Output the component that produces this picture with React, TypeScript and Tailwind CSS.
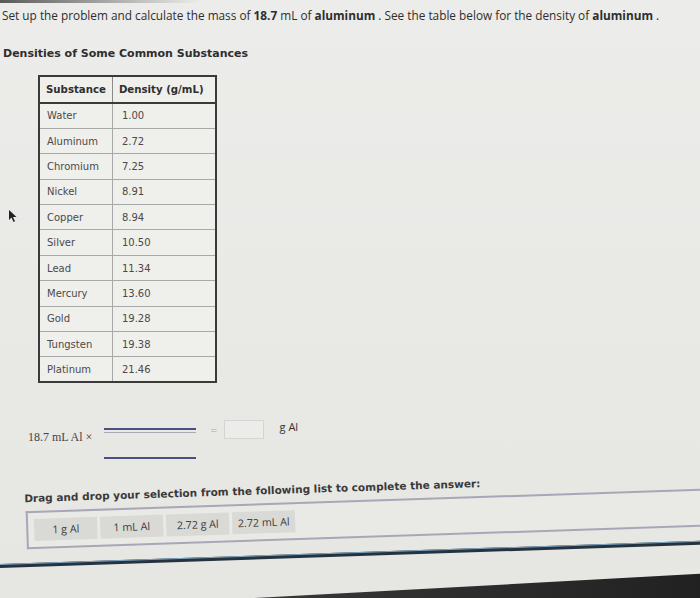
import React from "react";

const rows: [string, string][] = [
  ["Water", "1.00"],
  ["Aluminum", "2.72"],
  ["Chromium", "7.25"],
  ["Nickel", "8.91"],
  ["Copper", "8.94"],
  ["Silver", "10.50"],
  ["Lead", "11.34"],
  ["Mercury", "13.60"],
  ["Gold", "19.28"],
  ["Tungsten", "19.38"],
  ["Platinum", "21.46"],
];

const chips = ["1 g Al", "1 mL Al", "2.72 g Al", "2.72 mL Al"];

export default function App() {
  return (
    <div className="w-[700px] h-[598px] overflow-hidden bg-gradient-to-b from-[#ececea] to-[#e6e6e2] text-[#2e2e2e] relative">
      <div className="h-[3px] w-[200px] bg-gradient-to-r from-[#5a5a5a] to-transparent" />
      <div className="pl-[2px] pt-[4px] text-[11.8px] font-['Open_Sans',sans-serif] leading-[16px] whitespace-nowrap">
        Set up the problem and calculate the mass of <b>18.7</b> mL of <b>aluminum</b> . See the table below for the density of <b>aluminum</b> .
      </div>
      <div className="pl-[3px] mt-[23px] text-[11px] font-bold font-['DejaVu_Sans',sans-serif] leading-[16px]">
        Densities of Some Common Substances
      </div>
      <div className="flex mt-[13px]">
        <div className="w-[38px] flex flex-col items-start pt-[134px] pl-[8px]">
          <svg width="10" height="14" viewBox="0 0 10 14">
            <path d="M1 1 L1 11 L3.5 8.5 L5.5 13 L7 12.3 L5 8 L8.5 8 Z" fill="#222" />
          </svg>
        </div>
        <table className="border-collapse border-2 border-[#3a3a3a] font-['DejaVu_Sans',sans-serif] text-[10px] bg-[#efefec]">
          <thead>
            <tr className="h-[27px]">
              <th className="border border-[#8a8a8a] border-b-2 border-b-[#3a3a3a] px-[6px] text-left font-bold text-[10.2px] w-[72px]">Substance</th>
              <th className="border border-[#8a8a8a] border-b-2 border-b-[#3a3a3a] px-[6px] text-left font-bold text-[10.2px] w-[104px]">Density (g/mL)</th>
            </tr>
          </thead>
          <tbody>
            {rows.map(([s, d]) => (
              <tr key={s} className="h-[25.4px]">
                <td className="border border-[#a8a8a8] px-[7px] text-[#4a4a4a]">{s}</td>
                <td className="border border-[#a8a8a8] px-[9px] text-[#4a4a4a]">{d}</td>
              </tr>
            ))}
          </tbody>
        </table>
      </div>

      <div className="flex items-start mt-[36px] pl-[28px]">
        <div className="pt-[11px] text-[12px] leading-[14px] font-['Liberation_Serif',serif] text-[#444] w-[67px] whitespace-nowrap">
          18.7 mL Al ×
        </div>
        <div className="ml-[9px] flex flex-col w-[92px]">
          <div className="h-[9px]" />
          <div className="h-[2px] bg-[#4b4e80]" />
          <div className="mt-[2px] h-px bg-[#a9a9b5]" />
          <div className="h-[24px]" />
          <div className="h-[2px] bg-[#4b4e80]" />
        </div>
        <div className="ml-[14px] mt-[5px] text-[9px] text-[#aaa] font-['DejaVu_Sans',sans-serif]">=</div>
        <div className="ml-[6px] mt-[1px] w-[40px] h-[19px] border border-[#d4d4d0] bg-[#ececea]" />
        <div className="ml-[16px] mt-[0px] text-[11px] font-['Open_Sans',sans-serif] text-[#333]">g Al</div>
      </div>

      <div className="mt-[32px] -rotate-[1.9deg] origin-top-left">
        <div className="pl-[24px] text-[10.5px] font-bold font-['DejaVu_Sans',sans-serif] text-[#3a3a3a] leading-[16px]">
          Drag and drop your selection from the following list to complete the answer:
        </div>
        <div className="ml-[25px] mt-[5px] w-[720px] border-2 border-[#a9a6b8] border-r-0 px-[6px] py-[6px] flex gap-[3px] bg-[#e9e9e5]">
          {chips.map((c) => (
            <div key={c} className="w-[63px] h-[22px] bg-[#d9d9d5] flex items-center justify-center text-[10.7px] font-['Open_Sans',sans-serif] text-[#3a3a3a]">
              {c}
            </div>
          ))}
        </div>
        <div className="mt-[14px] w-[780px] -ml-[20px] h-[4px] bg-[#24333f] border-t border-[#7fa7c4]" />
        <div className="w-[780px] -ml-[20px] h-[60px] bg-[#d7d7d3]">
          <div className="ml-[240px] mt-[39px] h-[40px] -rotate-[1.2deg] origin-top-left bg-gradient-to-r from-[#3a3a3a] to-[#1e1e1e]" />
        </div>
      </div>
    </div>
  );
}
